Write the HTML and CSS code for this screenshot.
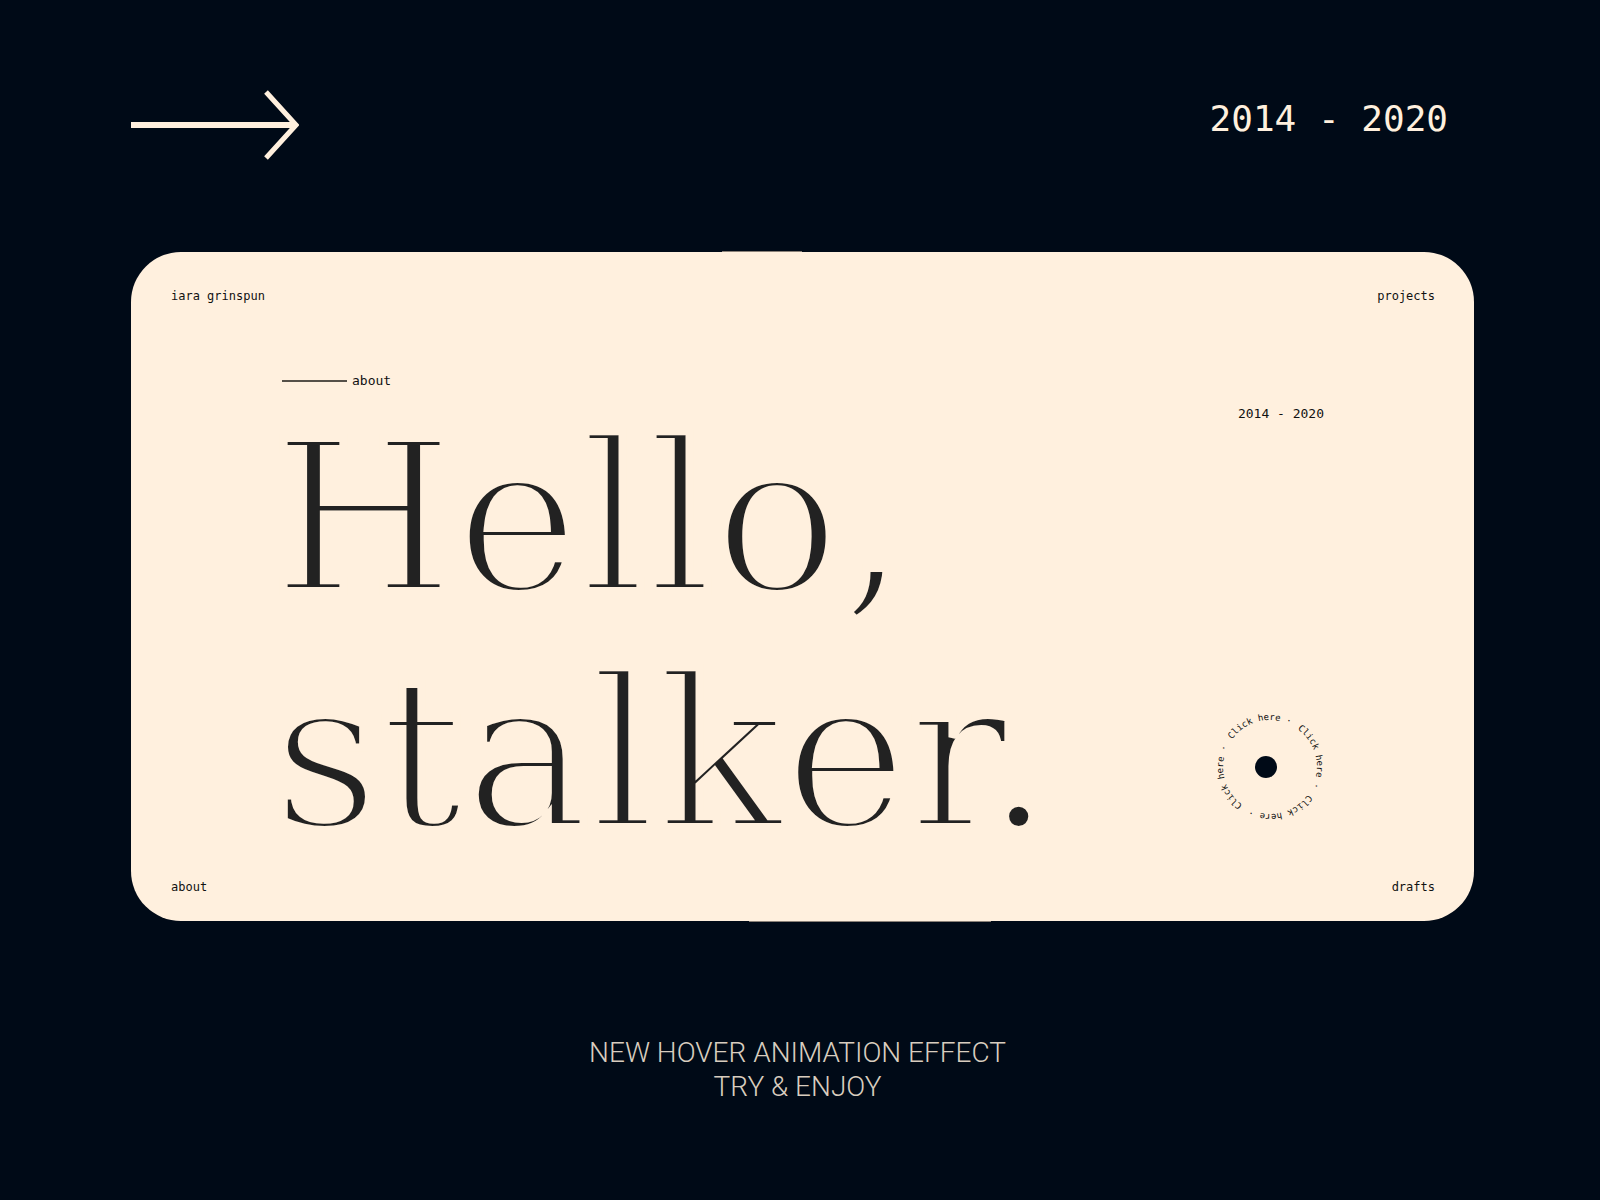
FILE: index.html
```html
<!DOCTYPE html>
<html lang="en">
<head>
<meta charset="utf-8">
<meta name="viewport" content="width=device-width, initial-scale=1">
<title>Iara Grinspun</title>
<link rel="stylesheet" href="styles.css">
</head>
<body>
<div class="page">
  <header class="masthead">
    <svg class="arrow" width="168" height="72" viewBox="0 0 168 72" fill="none" aria-hidden="true">
      <path d="M0 36H164" stroke-width="6"/>
      <path d="M135 3L165 36L135 69" stroke-width="5"/>
    </svg>
    <p class="years">2014 - 2020</p>
  </header>

  <main class="card">
    <nav class="bar">
      <a href="#home">iara grinspun</a>
      <a href="#projects">projects</a>
    </nav>
    <section class="hero">
      <div class="intro">
        <p class="eyebrow">about</p>
        <h1 class="title">Hello,<br>stalker.</h1>
      </div>
      <div class="side">
        <p class="period">2014 - 2020</p>
        <a class="ring" href="#about" aria-label="Click here">
          <svg width="108" height="108" viewBox="0 0 108 108">
            <defs>
              <path id="orbit" d="M54 7A47 47 0 0 1 54 101A47 47 0 0 1 54 7"/>
            </defs>
            <g class="ring-text" transform="rotate(-54 54 54)">
              <text><textPath href="#orbit">Click here ·</textPath></text>
              <text><textPath href="#orbit" startOffset="25%">Click here ·</textPath></text>
              <text><textPath href="#orbit" startOffset="50%">Click here ·</textPath></text>
              <text><textPath href="#orbit" startOffset="75%">Click here ·</textPath></text>
            </g>
            <circle class="ring-dot" cx="50" cy="54" r="11"/>
          </svg>
        </a>
      </div>
    </section>
    <nav class="bar">
      <a href="#about">about</a>
      <a href="#drafts">drafts</a>
    </nav>
  </main>

  <footer class="caption">
    <p>NEW HOVER ANIMATION EFFECT<br>TRY &amp; ENJOY</p>
  </footer>
</div>
</body>
</html>
```
FILE: styles.css
```css
:root {
  --night: #000a17;
  --cream: #fff0de;
  --ink: #222222;
  --mono: "DejaVu Sans Mono", monospace;
}

* {
  box-sizing: border-box;
}

body {
  margin: 0;
  background: var(--night);
  color: var(--cream);
  font-family: var(--mono);
}

p,
h1 {
  margin: 0;
}

a {
  color: inherit;
  text-decoration: none;
}

.page {
  min-height: 100vh;
  padding: 89px 126px 0 131px;
}

.masthead {
  display: flex;
  justify-content: space-between;
  align-items: flex-start;
  padding-right: 26px;
}

.arrow {
  display: block;
  stroke: var(--cream);
}

.years {
  padding-top: 8px;
  font-size: 36px;
  line-height: 44px;
}

.card {
  position: relative;
  margin-top: 91px;
  padding: 36px 39px 26px 40px;
  border-radius: 50px;
  background: var(--cream);
  color: #111111;
}

/* Thin tabs peeking out of the card's top and bottom edges. */
.card::before,
.card::after {
  content: "";
  position: absolute;
  height: 1px;
  background: #8a8178;
}

.card::before {
  top: -1px;
  left: 44%;
  width: 6%;
}

.card::after {
  bottom: -1px;
  left: 46%;
  width: 18%;
}

.bar {
  display: flex;
  justify-content: space-between;
  font-size: 12px;
  line-height: 16px;
}

.hero {
  display: flex;
  justify-content: space-between;
  padding: 69px 111px 6px;
}

.eyebrow {
  display: flex;
  align-items: center;
  gap: 5px;
  font-size: 13px;
  line-height: 16px;
}

.eyebrow::before {
  content: "";
  width: 65px;
  height: 2px;
  background: #555048;
}

/* A cream outline thins the letters down to a hairline weight. */
.title {
  margin: 12px 0 0 -10px;
  color: var(--ink);
  font-family: "DejaVu Serif", serif;
  font-size: 210px;
  font-weight: 400;
  line-height: 236px;
  white-space: nowrap;
  -webkit-text-stroke: 8px var(--cream);
}

.side {
  display: flex;
  flex-direction: column;
  justify-content: space-between;
  align-items: flex-end;
  padding: 33px 0 52px;
}

.period {
  font-size: 13px;
  line-height: 16px;
}

.ring,
.ring svg {
  display: block;
}

.ring-text {
  fill: #111111;
  font-family: var(--mono);
  font-size: 9px;
}

.ring-dot {
  fill: var(--night);
}

.caption {
  padding: 115px 10px 80px 0;
  color: #d8cdbf;
  font-family: Roboto, sans-serif;
  font-size: 28px;
  font-weight: 300;
  line-height: 34px;
  text-align: center;
}
```
